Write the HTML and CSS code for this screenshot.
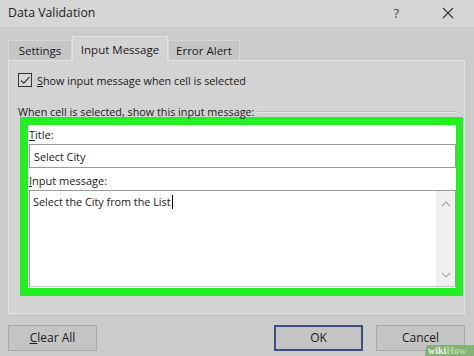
FILE: index.html
```html
<!DOCTYPE html>
<html lang="en">

<head>
    <meta charset="UTF-8">
    <meta name="viewport" content="width=device-width, initial-scale=1.0">
    <title>Data Validation</title>
    <link rel="stylesheet" href="styles.css">
</head>

<body>
    <div class="dialog">
        <header class="titlebar">
            <span class="title">Data Validation</span>
            <span class="help">?</span>
            <svg class="close" width="12" height="12" viewBox="0 0 12 12">
                <path d="M1 1 L11 11 M11 1 L1 11" stroke="#333" stroke-width="1.1" fill="none" />
            </svg>
        </header>

        <div class="tabs">
            <div class="tab">Settings</div>
            <div class="tab active">Input Message</div>
            <div class="tab">Error Alert</div>
        </div>

        <div class="panel">
            <label class="check-row">
                <span class="checkbox">
                    <svg width="12" height="12" viewBox="0 0 12 12">
                        <path d="M2 6.5 L4.8 9.2 L10.5 2.8" stroke="#333" stroke-width="1.1" fill="none" />
                    </svg>
                </span>
                <span><u>S</u>how input message when cell is selected</span>
            </label>

            <div class="group-label">
                <span>When cell is selected, show this input message:</span>
                <span class="group-line"></span>
            </div>

            <div class="highlight">
                <div class="field-label"><u>T</u>itle:</div>
                <div class="textbox">Select City</div>
                <div class="field-label field-label-2"><u>I</u>nput message:</div>
                <div class="textarea">
                    <div class="textarea-text">Select the City from the List<span class="caret"></span></div>
                    <div class="scrollbar">
                        <svg width="10" height="6" viewBox="0 0 10 6">
                            <path d="M1 5 L5 1 L9 5" stroke="#a8a8a8" stroke-width="1.1" fill="none" />
                        </svg>
                        <svg width="10" height="6" viewBox="0 0 10 6">
                            <path d="M1 1 L5 5 L9 1" stroke="#a8a8a8" stroke-width="1.1" fill="none" />
                        </svg>
                    </div>
                </div>
            </div>
        </div>

        <div class="buttons">
            <button class="btn"><u>C</u>lear All</button>
            <span class="spacer"></span>
            <button class="btn btn-default">OK</button>
            <button class="btn">Cancel</button>
        </div>

        <div class="watermark"><span class="wm-wiki">wiki</span><span class="wm-how">How</span></div>
    </div>
</body>

</html>
```

FILE: styles.css
```css
* {
    box-sizing: border-box;
}

body {
    margin: 0;
    font-family: "Open Sans", "Noto Sans", sans-serif;
    color: #1a1a1a;
}

.dialog {
    position: relative;
    width: 474px;
    height: 356px;
    background-color: #cbcbcb;
    overflow: hidden;
    font-size: 10.8px;
}

.titlebar {
    display: flex;
    align-items: center;
    height: 27px;
    padding: 0 20px 2px 8px;
    background-color: #d6d6d6;
}

.title {
    flex: 1;
    font-size: 12.3px;
    color: #222;
}

.help {
    font-size: 13px;
    color: #444;
    margin-right: 43px;
}

.tabs {
    display: flex;
    align-items: flex-end;
    height: 33px;
    padding-left: 8px;
}

.tab {
    height: 20px;
    padding-top: 2px;
    text-align: center;
    background-color: #c6c6c6;
    border: 1px solid #d8d8d8;
    border-bottom: none;
    font-size: 11.5px;
}

.tab:nth-child(1) {
    width: 64px;
}

.tab:nth-child(3) {
    width: 72px;
}

.tab.active {
    width: 96px;
    height: 25px;
    padding-top: 5px;
    margin-bottom: -1px;
    background-color: #d3d3d3;
    border-color: #e2e2e2;
    position: relative;
    z-index: 1;
}

.panel {
    height: 254px;
    margin: 0 9px 0 8px;
    border: 1px solid #e2e2e2;
    background-color: #d3d3d3;
}

.check-row {
    display: flex;
    align-items: center;
    gap: 5px;
    margin: 11px 0 0 9px;
    height: 16px;
}

.checkbox {
    display: flex;
    align-items: center;
    justify-content: center;
    width: 14px;
    height: 14px;
    border: 1px solid #333;
    background-color: #d8d8d8;
}

.group-label {
    display: flex;
    align-items: center;
    margin: 17px 8px 0 9px;
    height: 13px;
}

.group-line {
    flex: 1;
    margin-left: 3px;
    border-top: 1px solid #bdbdbd;
    border-bottom: 1px solid #e6e6e6;
}

.highlight {
    margin: -1px 1px 0 11px;
    height: 179px;
    border: 8px solid #22f022;
    border-right-width: 7px;
    background-color: #fff;
    padding: 0 0 0 1px;
}

.field-label {
    height: 19px;
    padding-top: 2px;
    font-size: 11px;
}

.field-label-2 {
    height: 22px;
    padding-top: 5px;
}

.textbox {
    height: 24px;
    padding: 4px 4px;
    border: 1px solid #9a9a9a;
}

.textarea {
    display: flex;
    height: 97px;
    border: 1px solid #9a9a9a;
    border-bottom-color: #c8c8c8;
}

.textarea-text {
    flex: 1;
    padding: 3px 3px;
}

.caret {
    display: inline-block;
    width: 1px;
    height: 14px;
    margin-left: 1px;
    vertical-align: -3px;
    background-color: #000;
}

.scrollbar {
    display: flex;
    flex-direction: column;
    justify-content: space-between;
    align-items: center;
    width: 19px;
    padding: 10px 0 8px;
    background-color: #f0f0f0;
}

.buttons {
    display: flex;
    gap: 13px;
    margin: 11px 9px 0 8px;
}

.spacer {
    flex: 1;
}

.btn {
    width: 89px;
    height: 26px;
    padding: 0 0 1px;
    font-family: inherit;
    font-size: 12px;
    line-height: 14px;
    color: #1a1a1a;
    background-color: #c4c4c4;
    border: 1px solid #a9a9a9;
}

.btn-default {
    border: 2px solid #3d4d7d;
}

.watermark {
    position: absolute;
    right: 0;
    bottom: 0;
    width: 56px;
    height: 11px;
    padding-left: 10px;
    line-height: 11px;
    background: linear-gradient(100deg, transparent 8px, rgba(110, 170, 90, 0.75) 9px);
    font-family: "Liberation Serif", serif;
    font-weight: bold;
    font-size: 10px;
}

.wm-wiki {
    color: #eef3ea;
}

.wm-how {
    color: #b8dca8;
}
```
